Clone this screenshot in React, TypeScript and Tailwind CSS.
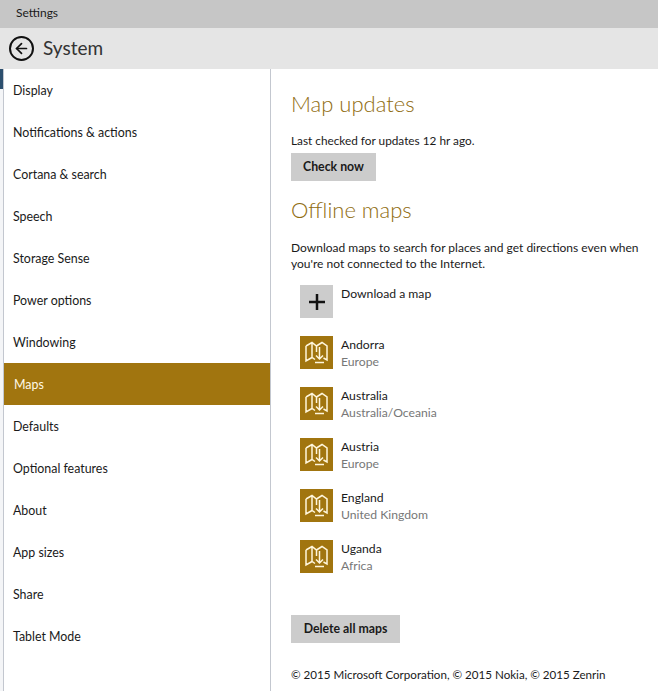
import { ArrowLeft } from "lucide-react";

const navItems = [
  "Display",
  "Notifications & actions",
  "Cortana & search",
  "Speech",
  "Storage Sense",
  "Power options",
  "Windowing",
  "Maps",
  "Defaults",
  "Optional features",
  "About",
  "App sizes",
  "Share",
  "Tablet Mode",
];

const maps = [
  { name: "Andorra", region: "Europe" },
  { name: "Australia", region: "Australia/Oceania" },
  { name: "Austria", region: "Europe" },
  { name: "England", region: "United Kingdom" },
  { name: "Uganda", region: "Africa" },
];

function MapIcon() {
  return (
    <svg width="23" height="23" viewBox="0 0 23 23" fill="none" stroke="#fff6dc" strokeWidth="1.5">
      <path d="M1 5 L7 1.500 L11.500 5 L17 1.500 L22 5 L22 19 L18.500 17 M1 5 L1 20 L7 16.500 L10 18.500 M7 1.500 L7 16.500 M11.500 5 L11.500 11" />
      <path d="M14.500 6 L14.500 18 M11 14.500 L14.500 18 L18 14.500" />
      <path d="M10 21.500 L19 21.500" />
    </svg>
  );
}

export default function App() {
  return (
    <div className="h-[691px] w-[658px] overflow-hidden bg-white font-['Lato','Open_Sans',sans-serif] text-[12px] text-[#1a1a1a]">
      <div className="flex h-[28px] items-center bg-[#c6c6c6] pb-[2px] pl-4 text-[12px]">Settings</div>
      <div className="flex h-[41px] items-center gap-[9px] bg-[#e5e5e5] pl-[9px]">
        <div className="flex h-[25px] w-[25px] items-center justify-center rounded-full border-2 border-[#111]">
          <ArrowLeft size={17} strokeWidth={2.4} className="text-[#111]" />
        </div>
        <span className="text-[19px] text-[#333]">System</span>
      </div>
      <div className="flex h-[622px]">
        <div className="w-[3px] shrink-0 bg-[#f4f5f7]">
          <div className="h-[20px] bg-[#2c4f6e]" />
        </div>
        <nav className="flex w-[268px] flex-col border-x border-[#c3c7cf] text-[12.4px]">
          {navItems.map((item) =>
            item === "Maps" ? (
              <div key={item} className="flex h-[42px] items-center bg-[#a1750f] pl-[10px] pt-[2px] text-[#fff8e6]">
                {item}
              </div>
            ) : (
              <div key={item} className="flex h-[42px] items-center pl-[9px] pt-[2px]">
                {item}
              </div>
            ),
          )}
        </nav>
        <main className="flex-1 pl-[20px] pt-[20px]">
          <h1 className="text-[22px] leading-[30px] font-light text-[#8f6c10]">Map updates</h1>
          <p className="mt-[13px] text-[11.8px] leading-[18px]">Last checked for updates 12 hr ago.</p>
          <button className="mt-[3px] block h-[28px] w-[85px] bg-[#cccccc] text-[12.3px] font-bold">Check now</button>
          <h2 className="mt-[14px] text-[22px] leading-[30px] font-light text-[#8f6c10]">Offline maps</h2>
          <p className="mt-[15px] w-[360px] leading-[16px]">
            Download maps to search for places and get directions even when you're not connected to the Internet.
          </p>
          <div className="mt-[13px] flex gap-[8px] pl-[9px]">
            <div className="flex h-[33px] w-[33px] items-center justify-center bg-[#cccccc] text-[#111]">
              <svg width="16" height="16" viewBox="0 0 16 16" fill="#111">
                <path d="M6.750 0h2.500v6.750H16v2.500H9.250V16h-2.500V9.250H0v-2.500h6.750z" />
              </svg>
            </div>
            <span className="text-[12.2px] leading-[18px]">Download a map</span>
          </div>
          <div className="mt-[18px] flex flex-col gap-[18px] pl-[9px]">
            {maps.map((m) => (
              <div key={m.name} className="flex h-[33px] gap-[8px]">
                <div className="flex h-[33px] w-[33px] items-center justify-center bg-[#a1750f]">
                  <MapIcon />
                </div>
                <div className="text-[12.2px] leading-[17px]">
                  <div>{m.name}</div>
                  <div className="text-[#777]">{m.region}</div>
                </div>
              </div>
            ))}
          </div>
          <button className="mt-[42px] block h-[28px] w-[109px] bg-[#cccccc] text-[12.3px] font-bold">Delete all maps</button>
          <p className="mt-[23px] text-[11.6px]">© 2015 Microsoft Corporation, © 2015 Nokia, © 2015 Zenrin</p>
        </main>
      </div>
    </div>
  );
}
